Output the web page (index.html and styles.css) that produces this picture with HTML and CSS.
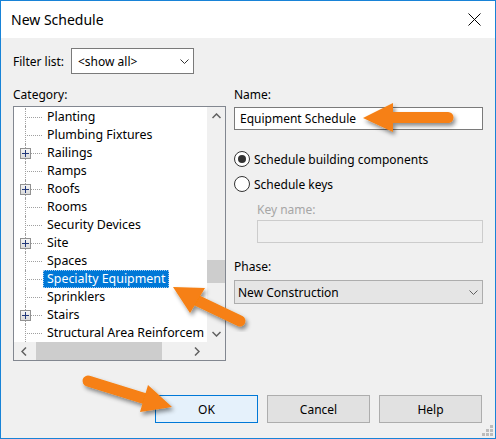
FILE: index.html
```html
<!DOCTYPE html>
<html>
<head>
<meta charset="utf-8">
<title>New Schedule</title>
<link rel="stylesheet" href="styles.css">
</head>
<body>
<div class="window">
  <div class="titlebar">
    <span class="title">New Schedule</span>
    <span class="close"><svg width="13" height="13" viewBox="0 0 13 13"><path d="M0.5 0.5L12.5 12.5M12.5 0.5L0.5 12.5" stroke="#000" stroke-width="1" fill="none"/></svg></span>
  </div>
  <div class="content">
    <div class="filter-row">
      <span class="filter-label">Filter list:</span>
      <div class="combo combo-filter">
        <span>&lt;show all&gt;</span>
        <svg width="9" height="5" viewBox="0 0 9 5"><polyline points="0.5,0.5 4.5,4.5 8.5,0.5" fill="none" stroke="#333" stroke-width="1"/></svg>
      </div>
    </div>
    <div class="main">
      <div class="col-left">
        <div class="label-line">Category:</div>
        <div class="tree">
          <div class="tree-list">
            <div class="row"><span class="conn"></span><span class="txt">Planting</span></div>
            <div class="row"><span class="conn"></span><span class="txt">Plumbing Fixtures</span></div>
            <div class="row"><span class="conn"><span class="plus"><svg width="9" height="9" viewBox="0 0 9 9"><rect x="1" y="4" width="7" height="1" fill="#23397a"/><rect x="4" y="1" width="1" height="7" fill="#23397a"/></svg></span></span><span class="txt">Railings</span></div>
            <div class="row"><span class="conn"></span><span class="txt">Ramps</span></div>
            <div class="row"><span class="conn"><span class="plus"><svg width="9" height="9" viewBox="0 0 9 9"><rect x="1" y="4" width="7" height="1" fill="#23397a"/><rect x="4" y="1" width="1" height="7" fill="#23397a"/></svg></span></span><span class="txt">Roofs</span></div>
            <div class="row"><span class="conn"></span><span class="txt">Rooms</span></div>
            <div class="row"><span class="conn"></span><span class="txt">Security Devices</span></div>
            <div class="row"><span class="conn"><span class="plus"><svg width="9" height="9" viewBox="0 0 9 9"><rect x="1" y="4" width="7" height="1" fill="#23397a"/><rect x="4" y="1" width="1" height="7" fill="#23397a"/></svg></span></span><span class="txt">Site</span></div>
            <div class="row"><span class="conn"></span><span class="txt">Spaces</span></div>
            <div class="row"><span class="conn"></span><span class="txt selected">Specialty Equipment</span></div>
            <div class="row"><span class="conn"></span><span class="txt">Sprinklers</span></div>
            <div class="row"><span class="conn"><span class="plus"><svg width="9" height="9" viewBox="0 0 9 9"><rect x="1" y="4" width="7" height="1" fill="#23397a"/><rect x="4" y="1" width="1" height="7" fill="#23397a"/></svg></span></span><span class="txt">Stairs</span></div>
            <div class="row"><span class="conn"></span><span class="txt">Structural Area Reinforcem</span></div>
          </div>
          <div class="vscroll">
            <div class="sb-btn-v"><svg width="9" height="6" viewBox="0 0 9 6"><polyline points="0.5,5 4.5,1 8.5,5" fill="none" stroke="#606060" stroke-width="1.5"/></svg></div>
            <div class="track-v"><div class="thumb-v"></div></div>
            <div class="sb-btn-v"><svg width="9" height="6" viewBox="0 0 9 6"><polyline points="0.5,1 4.5,5 8.5,1" fill="none" stroke="#606060" stroke-width="1.5"/></svg></div>
          </div>
          <div class="hscroll">
            <div class="sb-btn-h"><svg width="6" height="9" viewBox="0 0 6 9"><polyline points="5,0.5 1,4.5 5,8.5" fill="none" stroke="#606060" stroke-width="1.5"/></svg></div>
            <div class="track-h"><div class="thumb-h"></div></div>
            <div class="sb-btn-h"><svg width="6" height="9" viewBox="0 0 6 9"><polyline points="1,0.5 5,4.5 1,8.5" fill="none" stroke="#606060" stroke-width="1.5"/></svg></div>
          </div>
          <div class="corner"></div>
        </div>
      </div>
      <div class="col-right">
        <div class="label-line">Name:</div>
        <div class="name-input">Equipment Schedule</div>
        <div class="radio-row first"><span class="radio"><span class="dot"></span></span><span>Schedule building components</span></div>
        <div class="radio-row second"><span class="radio"></span><span>Schedule keys</span></div>
        <div class="label-line key-label">Key name:</div>
        <div class="key-input"></div>
        <div class="label-line phase-label">Phase:</div>
        <div class="combo combo-phase">
          <span>New Construction</span>
          <svg width="9" height="5" viewBox="0 0 9 5"><polyline points="0.5,0.5 4.5,4.5 8.5,0.5" fill="none" stroke="#606060" stroke-width="1"/></svg>
        </div>
      </div>
    </div>
    <div class="buttons">
      <div class="btn default">OK</div>
      <div class="btn">Cancel</div>
      <div class="btn">Help</div>
    </div>
  </div>
  <svg class="grip" width="11" height="11" viewBox="0 0 11 11">
    <rect x="8" y="0" width="3" height="3" fill="#bcbcbc"/>
    <rect x="4" y="4" width="3" height="3" fill="#bcbcbc"/>
    <rect x="8" y="4" width="3" height="3" fill="#bcbcbc"/>
    <rect x="0" y="8" width="3" height="3" fill="#bcbcbc"/>
    <rect x="4" y="8" width="3" height="3" fill="#bcbcbc"/>
    <rect x="8" y="8" width="3" height="3" fill="#bcbcbc"/>
  </svg>
</div>
<svg class="arrows" width="496" height="439" viewBox="0 0 496 439">
  <defs>
    <filter id="sh" x="-30%" y="-30%" width="160%" height="160%">
      <feDropShadow dx="2" dy="3" stdDeviation="2" flood-color="#000" flood-opacity="0.45"/>
    </filter>
  </defs>
  <g filter="url(#sh)">
    <line x1="390" y1="117.5" x2="448" y2="117.5" stroke="#f68012" stroke-width="11" stroke-linecap="round"/>
    <polygon points="363,118 393,103 393,132" fill="#f68012"/>
  </g>
  <g filter="url(#sh)">
    <line x1="196" y1="300" x2="240" y2="321" stroke="#f68012" stroke-width="11" stroke-linecap="round"/>
    <polygon points="173,287 190,313 205,288" fill="#f68012"/>
  </g>
  <g filter="url(#sh)">
    <line x1="88" y1="381" x2="146" y2="399" stroke="#f68012" stroke-width="11" stroke-linecap="round"/>
    <polygon points="172,407 148,385 140,412" fill="#f68012"/>
  </g>
</svg>
</body>
</html>
```

FILE: styles.css
```css
* { box-sizing: border-box; }
html, body { margin: 0; padding: 0; }
body {
  width: 496px;
  height: 439px;
  overflow: hidden;
  position: relative;
  font-family: "Noto Sans", "Liberation Sans", sans-serif;
  font-size: 12px;
  color: #000;
  background: #f0f0f0;
}
.window {
  width: 496px;
  height: 439px;
  border: 1px solid #1883d7;
  background: #f0f0f0;
  display: flex;
  flex-direction: column;
  position: relative;
}
.titlebar {
  height: 37px;
  flex: none;
  background: #fff;
  display: flex;
  align-items: center;
  justify-content: space-between;
  padding: 0 14px 0 10px;
}
.title { font-size: 14px; }
.close { display: flex; }
.content {
  flex: 1;
  display: flex;
  flex-direction: column;
  padding: 10px 12px 15px 12px;
}
.filter-row { display: flex; align-items: center; height: 26px; }
.filter-label { width: 58px; }
.combo {
  display: flex;
  align-items: center;
  justify-content: space-between;
  border: 1px solid #7a7a7a;
  white-space: nowrap;
}
.combo-filter { width: 123px; height: 26px; background: #fff; padding: 0 4px 0 6px; }
.main {
  display: grid;
  grid-template-columns: 213px 249px;
  column-gap: 8px;
  margin-top: 13px;
}
.label-line { height: 16px; line-height: 16px; white-space: nowrap; }
.tree {
  margin-top: 3px;
  height: 255px;
  border: 1px solid #828790;
  background: #fff;
  display: grid;
  grid-template-columns: 193px 18px;
  grid-template-rows: 1fr 18px;
  font-size: 12.4px;
}
.tree-list { overflow: hidden; padding-top: 1px; }
.row { display: flex; align-items: center; height: 18px; white-space: nowrap; }
.conn { position: relative; width: 29px; height: 18px; flex: none; }
.conn::before {
  content: "";
  position: absolute;
  left: 11px; top: 0; bottom: 0;
  border-left: 1px dotted #a0a0a0;
}
.conn::after {
  content: "";
  position: absolute;
  left: 13px; top: 9px; width: 15px;
  border-top: 1px dotted #a0a0a0;
}
.plus {
  position: absolute;
  left: 6px; top: 4px;
  width: 11px; height: 11px;
  border: 1px solid #919191;
  background: linear-gradient(#f4f4f4, #dadada);
  z-index: 1;
  display: flex;
}
.txt {
  padding: 0 3px;
  line-height: 16px;
  border: 1px dotted transparent;
}
.txt.selected {
  background: #0078d7;
  color: #fff;
  border-color: #9fcaf0;
}
.vscroll { background: #f0f0f0; display: flex; flex-direction: column; }
.sb-btn-v { height: 17px; flex: none; display: flex; align-items: center; justify-content: center; }
.track-v { flex: 1; }
.thumb-v { margin-top: 136px; height: 23px; background: #cdcdcd; }
.hscroll { background: #f0f0f0; display: flex; }
.sb-btn-h { width: 20px; flex: none; display: flex; align-items: center; justify-content: center; }
.track-h { flex: 1; }
.thumb-h { margin-left: 2px; width: 126px; height: 100%; background: #cdcdcd; }
.corner { background: #f0f0f0; }
.name-input {
  margin-top: 4px;
  height: 23px;
  border: 1px solid #7a7a7a;
  background: #fff;
  padding-left: 5px;
  display: flex;
  align-items: center;
  white-space: nowrap;
}
.radio-row { display: flex; align-items: center; height: 16px; white-space: nowrap; }
.radio-row.first { margin-top: 21px; }
.radio-row.second { margin-top: 9px; }
.radio {
  width: 16px; height: 16px;
  border-radius: 50%;
  border: 1px solid #333;
  background: #fff;
  margin-right: 4px;
  display: flex;
  align-items: center;
  justify-content: center;
  flex: none;
}
.dot { width: 8px; height: 8px; border-radius: 50%; background: #333; }
.key-label { margin-top: 10px; margin-left: 23px; color: #a6a6a6; }
.key-input {
  margin-top: 2px;
  margin-left: 23px;
  height: 23px;
  border: 1px solid #cccccc;
  background: #f0f0f0;
}
.phase-label { margin-top: 16px; }
.combo-phase {
  margin-top: 5px;
  height: 24px;
  background: #e5e5e5;
  border-color: #adadad;
  padding: 0 4px 0 3px;
}
.buttons {
  margin-top: auto;
  display: flex;
  justify-content: flex-end;
  gap: 9px;
  padding-right: 1px;
}
.btn {
  width: 103px;
  height: 28px;
  border: 1px solid #adadad;
  background: #e1e1e1;
  display: flex;
  align-items: center;
  justify-content: center;
}
.btn.default { border-color: #0078d7; background: #e5f1fb; }
.grip { position: absolute; right: 2px; bottom: 2px; }
.arrows { position: absolute; left: 0; top: 0; pointer-events: none; }
```
